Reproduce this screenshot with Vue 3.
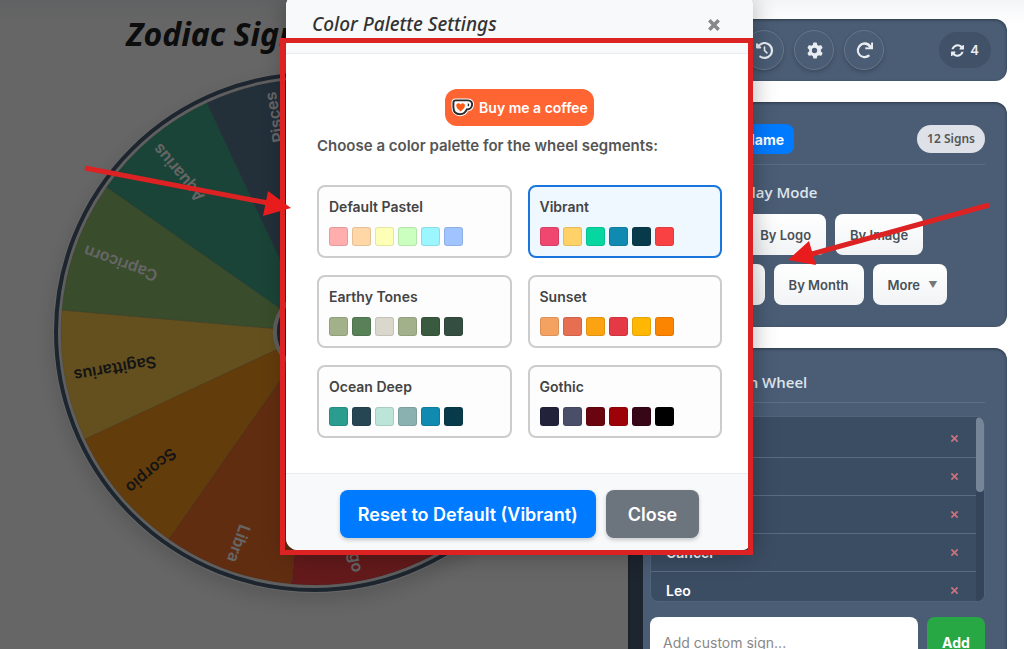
<template>
    <div class="page">
        <main class="stage">
            <h1 class="stage-title">Zodiac Sign Picker Wheel</h1>
            <svg class="wheel" viewBox="-260 -260 520 520">
                <circle r="257" class="wheel-rim" />
                <path
                    v-for="(sign, index) in wheelSigns"
                    :key="sign.name"
                    :d="segmentPath(index)"
                    :fill="sign.color"
                    class="wheel-segment"
                />
                <text
                    v-for="(sign, index) in wheelSigns"
                    :key="sign.name"
                    class="wheel-label"
                    :fill="sign.dark ? '#333333' : '#ffffff'"
                    :transform="`rotate(${index * 30 - 70})`"
                    x="243"
                    y="4"
                >
                    {{ sign.name }}
                </text>
                <circle r="39" class="wheel-hub" />
            </svg>
        </main>

        <aside class="sidebar">
            <section class="panel toolbar">
                <button
                    v-for="tool in tools"
                    :key="tool.label"
                    class="tool"
                    :aria-label="tool.label"
                >
                    <svg viewBox="0 0 512 512"><path :d="tool.path" /></svg>
                </button>
                <span class="spin-count">
                    <svg viewBox="0 0 512 512"><path :d="syncPath" /></svg>
                    4
                </span>
            </section>

            <section class="panel">
                <div class="panel-head">
                    <button class="mode-pill">By Name</button>
                    <span class="sign-count">12 Signs</span>
                </div>
                <h2 class="panel-title">Choose a Display Mode</h2>
                <div class="modes">
                    <button v-for="mode in modes" :key="mode" class="mode">
                        {{ mode }}
                    </button>
                    <button class="mode more">More <span>▼</span></button>
                </div>
            </section>

            <section class="panel">
                <h2 class="panel-title lined">Active Signs on Wheel</h2>
                <div class="list">
                    <ul class="rows">
                        <li v-for="name in listed" :key="name" class="row">
                            {{ name }}
                            <button class="remove" :aria-label="`Remove ${name}`">
                                <svg viewBox="0 0 10 10">
                                    <path d="M1.5 1.5 8.5 8.5M8.5 1.5 1.5 8.5" />
                                </svg>
                            </button>
                        </li>
                    </ul>
                    <div class="scrollbar"><div class="thumb"></div></div>
                </div>
                <form class="add-form" @submit.prevent>
                    <input
                        type="text"
                        aria-label="Add custom sign"
                        placeholder="Add custom sign..."
                    />
                    <button type="submit">Add</button>
                </form>
            </section>
        </aside>

        <div class="dim"></div>

        <div class="modal" role="dialog" aria-labelledby="modal-title">
            <header class="modal-head">
                <h2 id="modal-title">Color Palette Settings</h2>
                <button class="modal-close" aria-label="Close dialog">
                    <svg viewBox="0 0 12 12">
                        <path d="M2 2 10 10M10 2 2 10" />
                    </svg>
                </button>
            </header>
            <div class="modal-body">
                <a class="coffee" href="#">
                    <svg viewBox="0 0 24 20">
                        <path class="cup-edge" :d="cupPath" />
                        <path class="cup" :d="cupPath" />
                        <path class="handle" d="M17.5 5.5V9C19.5 8.500 19.700 6 17.500 5.500Z" />
                        <path
                            class="heart"
                            d="M10 14C7 11.500 5.500 10 5.500 8 5.500 5.500 8.500 4.700 10 6.800 11.500 4.700 14.500 5.500 14.500 8 14.500 10 13 11.500 10 14Z"
                        />
                    </svg>
                    Buy me a coffee
                </a>
                <p class="hint">Choose a color palette for the wheel segments:</p>
                <div class="palettes">
                    <button
                        v-for="palette in palettes"
                        :key="palette.name"
                        class="palette"
                        :class="{ active: palette.name === selected }"
                        @click="selected = palette.name"
                    >
                        <span class="palette-name">{{ palette.name }}</span>
                        <span class="swatches">
                            <span
                                v-for="(color, index) in palette.colors"
                                :key="index"
                                class="swatch"
                                :style="{ background: color }"
                            ></span>
                        </span>
                    </button>
                </div>
            </div>
            <footer class="modal-foot">
                <button class="reset" @click="selected = 'Vibrant'">
                    Reset to Default (Vibrant)
                </button>
                <button class="close">Close</button>
            </footer>
        </div>

        <svg class="marks" viewBox="0 0 1024 649">
            <rect x="282.500" y="40.500" width="468" height="512" />
            <path class="shaft" d="M85 168 268 203M989 205 812 254" />
            <path class="tip" d="M268 191 291 208 263 216ZM809 241 788 260 816 265Z" />
        </svg>
    </div>
</template>

<script setup>
import { ref } from "vue";

const selected = ref("Vibrant");

const palettes = [
    {
        name: "Default Pastel",
        colors: ["#ffadad", "#ffd6a5", "#fdffb6", "#caffbf", "#9bf6ff", "#a0c4ff"],
    },
    {
        name: "Vibrant",
        colors: ["#ef476f", "#ffd166", "#06d6a0", "#118ab2", "#073b4c", "#f94144"],
    },
    {
        name: "Earthy Tones",
        colors: ["#a3b18a", "#588157", "#dad7cd", "#a3b18a", "#3a5a40", "#344e41"],
    },
    {
        name: "Sunset",
        colors: ["#f4a261", "#e76f51", "#fca311", "#e63946", "#ffb703", "#fb8500"],
    },
    {
        name: "Ocean Deep",
        colors: ["#2a9d8f", "#264653", "#bce4d8", "#8bb0b0", "#118ab2", "#073b4c"],
    },
    {
        name: "Gothic",
        colors: ["#22223b", "#4a4e69", "#6a040f", "#9d0208", "#370617", "#000000"],
    },
];

const wheelSigns = [
    { name: "Aries", color: "#577590" },
    { name: "Taurus", color: "#43aa8b" },
    { name: "Gemini", color: "#90be6d" },
    { name: "Cancer", color: "#f9c74f", dark: true },
    { name: "Leo", color: "#f94144" },
    { name: "Virgo", color: "#f94144" },
    { name: "Libra", color: "#f3722c" },
    { name: "Scorpio", color: "#f8961e", dark: true },
    { name: "Sagittarius", color: "#f9c74f", dark: true },
    { name: "Capricorn", color: "#90be6d" },
    { name: "Aquarius", color: "#43aa8b" },
    { name: "Pisces", color: "#577590" },
];

const modes = ["By Name", "By Logo", "By Image", "By Birthstone", "By Month"];
const listed = ["Aries", "Taurus", "Gemini", "Cancer", "Leo"];

const cupPath =
    "M5 2.5H17.5C21 2.5 22.5 5 22 7.5 21.5 10.5 19 12 16.5 12 15 15.5 12.5 17 9.5 17 5 17 2.5 14 2.5 9.5V5C2.5 3.5 3.5 2.5 5 2.5Z";
const historyPath =
    "M75 75 41 41C26 26 0 37 0 58v110c0 13 11 24 24 24h110c21 0 32-26 17-41l-31-31a192 192 0 1 1 26 293c-14-10-34-7-44 8s-7 34 8 44A256 256 0 1 0 75 75zm181 53c-13 0-24 11-24 24v104c0 6 3 13 7 17l72 72c9 9 25 9 34 0s9-25 0-34l-65-65v-94c0-13-11-24-24-24z";
const gearPath =
    "M496 167c3 8 1 18-6 24l-43 39a200 200 0 0 1 0 52l43 39c7 6 9 16 6 24-8 22-20 43-33 62-6 7-15 10-24 7l-56-17c-13 10-28 19-44 25l-13 57c-2 9-9 16-18 17a270 270 0 0 1-72 0c-9-1-16-8-18-17l-13-57c-16-6-31-15-44-25l-56 17c-9 3-18 0-24-7-13-19-25-40-33-62-3-8-1-18 6-24l43-39a200 200 0 0 1 0-52l-43-39c-7-6-9-16-6-24 8-22 20-43 33-62 6-7 15-10 24-7l56 17c13-10 28-19 44-25l13-57c2-9 9-16 18-17a270 270 0 0 1 72 0c9 1 16 8 18 17l13 57c16 6 31 15 44 25l56-17c9-3 18 0 24 7 13 19 25 40 33 62zM256 336a80 80 0 1 0 0-160 80 80 0 0 0 0 160z";
const redoPath =
    "M500 16h-32c-8 0-14 6-14 14l3 76A240 240 0 1 0 418 432c6-5 6-13 1-18l-34-34c-4-4-12-5-17-1a168 168 0 1 1 29-214l-103-5c-8 0-14 6-14 14v34c0 8 6 14 14 14h206c8 0 14-6 14-14V30c0-8-6-14-14-14z";
const syncPath =
    "M370 142A160 160 0 0 0 105 198c-3 7-9 12-16 12H33c-9 0-15-8-13-16A248 248 0 0 1 431 81l35-35c15-15 46-4 46 17v130c0 13-11 24-24 24H358c-22 0-33-26-17-41zM142 370a160 160 0 0 0 265-56c3-7 9-12 16-12h56c9 0 15 8 13 16A248 248 0 0 1 81 431l-35 35C31 481 0 470 0 449V319c0-13 11-24 24-24h130c22 0 33 26 17 41z";

const tools = [
    { label: "Share", path: redoPath },
    { label: "Sound", path: gearPath },
    { label: "History", path: historyPath },
    { label: "Settings", path: gearPath },
    { label: "Reset", path: redoPath },
];

const point = (degrees) => {
    const angle = (degrees * Math.PI) / 180;
    return `${252 * Math.cos(angle)} ${252 * Math.sin(angle)}`;
};

// each sign takes 30 degrees, clockwise from just past the top
const segmentPath = (index) => {
    const start = index * 30 - 85;
    return `M0 0L${point(start)}A252 252 0 0 1 ${point(start + 30)}Z`;
};
</script>

<style>
body {
    background: #fff;
}
</style>

<style scoped>
.page {
    position: relative;
    display: flex;
    height: 100vh;
    overflow: hidden;
    font-family: Inter, "Liberation Sans", sans-serif;
    background: linear-gradient(#f3f5f7, #fff 24px);
}

button,
input {
    font-family: inherit;
    border: none;
}

button {
    cursor: pointer;
}

h1,
h2,
p,
ul {
    margin: 0;
    padding: 0;
}

.stage {
    flex: 1;
    min-width: 0;
    display: flex;
    flex-direction: column;
    align-items: center;
    padding-top: 10px;
}

.stage-title {
    font: italic 700 32px/48px "Noto Sans", sans-serif;
    color: #222;
}

.wheel {
    width: 522px;
    height: 522px;
    flex: none;
    margin-top: 13px;
    border-radius: 50%;
    box-shadow: 0 8px 20px rgba(0, 0, 0, 0.15);
}

.wheel-rim {
    fill: #eee;
    stroke: #4a5d75;
    stroke-width: 4;
}

.wheel-segment {
    stroke: rgba(0, 0, 0, 0.1);
}

.wheel-label {
    font-size: 16px;
    font-weight: 600;
    text-anchor: end;
}

.wheel-hub {
    fill: #4a5d75;
    stroke: #eee;
    stroke-width: 4;
}

.sidebar {
    width: 379px;
    flex: none;
    display: flex;
    flex-direction: column;
    gap: 21px;
    padding: 19px 17px 0 0;
}

.panel {
    flex: none;
    box-sizing: border-box;
    padding: 22px;
    border-radius: 12px;
    background: #4a5d75;
    box-shadow: inset 0 1px 3px rgba(0, 0, 0, 0.4);
}

.toolbar {
    display: flex;
    align-items: center;
    gap: 10px;
    height: 62px;
    padding: 0 16px;
}

.tool {
    display: flex;
    align-items: center;
    justify-content: center;
    flex: none;
    width: 40px;
    height: 40px;
    padding: 0;
    border: 1px solid #66778c;
    border-radius: 50%;
    background: #4a5d75;
    box-shadow: 0 2px 4px rgba(0, 0, 0, 0.2);
}

.tool svg {
    width: 17px;
    fill: #e9edf2;
}

.spin-count {
    display: flex;
    align-items: center;
    gap: 6px;
    margin-left: auto;
    padding: 0 12px;
    height: 36px;
    border-radius: 18px;
    background: #415268;
    color: #e9edf2;
    font-size: 13px;
    font-weight: 600;
}

.spin-count svg {
    width: 13px;
    fill: #e9edf2;
}

.panel-head {
    display: flex;
    justify-content: space-between;
    align-items: center;
    padding-bottom: 10px;
    border-bottom: 1px solid #5b6c82;
}

.mode-pill {
    width: 144px;
    height: 30px;
    padding: 0 10px;
    border-radius: 8px;
    background: #007bff;
    color: #fff;
    font-size: 14px;
    font-weight: 700;
    text-align: right;
}

.sign-count {
    padding: 0 10px;
    border-radius: 14px;
    background: #dee2e8;
    color: #555;
    font: 600 12px/28px "Noto Sans", sans-serif;
}

.panel-title {
    font: 600 15px/24px "Open Sans", sans-serif;
    color: #dfe5ec;
}

.panel-head + .panel-title {
    margin: 15px 0 10px;
}

.panel-title.lined {
    padding-bottom: 8px;
    border-bottom: 1px solid #5f7086;
}

.modes {
    display: flex;
    flex-wrap: wrap;
    gap: 9px;
}

.mode {
    height: 41px;
    padding: 0 15px;
    border-radius: 8px;
    background: linear-gradient(#fff, #f1f3f5);
    color: #495057;
    font-size: 13px;
    font-weight: 600;
}

.more {
    padding-right: 9px;
}

.more span {
    margin-left: 5px;
    font-size: 9px;
    vertical-align: 2px;
    color: #777;
}

.list {
    display: flex;
    height: 186px;
    margin-top: 13px;
    overflow: hidden;
    box-sizing: border-box;
    border: 1px solid #52647a;
    border-radius: 8px;
    background: #3b4d63;
}

.rows {
    flex: 1;
    padding-top: 3px;
    list-style: none;
}

.row {
    display: flex;
    align-items: center;
    justify-content: space-between;
    height: 37px;
    padding: 0 15px;
    border-bottom: 1px solid #5a6c82;
    color: #fff;
    font-size: 14px;
    font-weight: 600;
}

.remove {
    display: flex;
    padding: 2px;
    background: none;
}

.remove svg {
    width: 9px;
    stroke: #c9707c;
    stroke-width: 2;
}

.scrollbar {
    width: 8px;
    background: #34445a;
}

.thumb {
    height: 75px;
    border-radius: 4px;
    background: #768597;
}

.add-form {
    display: flex;
    gap: 9px;
    margin-top: 15px;
}

.add-form input {
    flex: 1;
    min-width: 0;
    height: 50px;
    box-sizing: border-box;
    padding: 0 13px;
    border-radius: 8px;
    font-size: 14px;
}

.add-form input::placeholder {
    color: #888;
}

.add-form button {
    width: 58px;
    border-radius: 8px;
    background: #28a745;
    color: #fff;
    font-size: 14px;
    font-weight: 700;
}

.dim {
    position: absolute;
    inset: 0 auto 0 0;
    width: 643px;
    background: rgba(0, 0, 0, 0.6);
}

.modal {
    position: absolute;
    top: -6px;
    left: 286px;
    width: 467px;
    border-radius: 12px;
    overflow: hidden;
    background: #fff;
    box-shadow: 0 5px 25px rgba(0, 0, 0, 0.3);
}

.modal-head {
    display: flex;
    align-items: center;
    justify-content: space-between;
    padding: 15px 32px 13px 26px;
    border-bottom: 1px solid #e9ecef;
    background: #f8f9fa;
}

.modal-head h2 {
    font: italic 500 19px/31px "Noto Sans", sans-serif;
    color: #333;
}

.modal-close {
    display: flex;
    padding: 0;
    background: none;
}

.modal-close svg {
    width: 14px;
    stroke: #888;
    stroke-width: 3;
}

.modal-body {
    display: flex;
    flex-direction: column;
    align-items: center;
    padding: 35px 31px;
}

.coffee {
    display: flex;
    align-items: center;
    gap: 5px;
    height: 37px;
    padding: 0 6px;
    border-radius: 12px;
    background: #ff6433;
    color: #fff;
    font-size: 14px;
    font-weight: 600;
    text-decoration: none;
}

.coffee svg {
    width: 23px;
}

.cup-edge {
    fill: #fff;
    stroke: #fff;
    stroke-width: 4;
}

.cup {
    fill: #fff;
    stroke: #2b2b2b;
    stroke-width: 2;
}

.handle {
    fill: #2b2b2b;
}

.heart {
    fill: #ff5a16;
}

.hint {
    align-self: flex-start;
    margin: 8px 0 27px;
    font-size: 15px;
    line-height: 24px;
    font-weight: 600;
    color: #555;
    white-space: nowrap;
}

.palettes {
    display: grid;
    grid-template-columns: 1fr 1fr;
    gap: 17px 16px;
    width: 100%;
}

.palette {
    display: flex;
    flex-direction: column;
    gap: 10px;
    padding: 10px;
    border: 2px solid #ccc;
    border-radius: 8px;
    background: #fdfdfd;
    text-align: left;
}

.palette.active {
    border-color: #1a75dd;
    background: #f0f8ff;
}

.palette-name {
    font-size: 14px;
    line-height: 20px;
    font-weight: 600;
    color: #444;
}

.swatches {
    display: flex;
    gap: 4px;
}

.swatch {
    box-sizing: border-box;
    width: 19px;
    height: 19px;
    border: 1px solid rgba(0, 0, 0, 0.1);
    border-radius: 3px;
}

.modal-foot {
    display: flex;
    justify-content: center;
    gap: 10px;
    padding: 16px 0 12px;
    border-top: 1px solid #e9ecef;
    background: #f8f9fa;
}

.modal-foot button {
    height: 48px;
    border-radius: 8px;
    color: #fff;
    font-size: 18px;
    font-weight: 600;
    box-shadow: 0 2px 4px rgba(0, 0, 0, 0.2);
}

.reset {
    padding: 0 18px;
    background: #007bff;
}

.close {
    padding: 0 22px;
    background: #6c757d;
}

.marks {
    position: absolute;
    top: 0;
    left: 0;
    width: 1024px;
    height: 649px;
    pointer-events: none;
}

.marks rect,
.shaft {
    fill: none;
    stroke: #dc2222;
    stroke-width: 5;
}

.tip {
    fill: #e81c1c;
}
</style>
